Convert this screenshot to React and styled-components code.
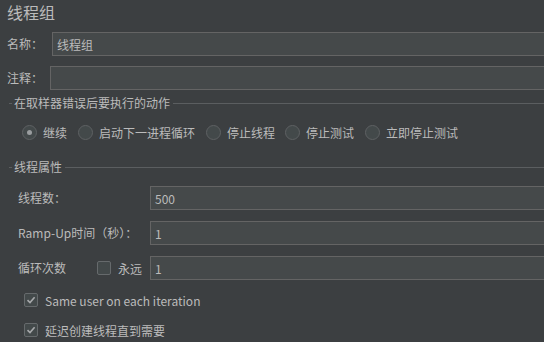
import React from "react";
import styled, { createGlobalStyle } from "styled-components";

const Global = createGlobalStyle`
  html, body { margin: 0; padding: 0; background: #3c3f41; overflow: hidden; }
  body { font-family: "Noto Sans CJK SC", "Liberation Sans", sans-serif; }
`;

const Panel = styled.div`
  width: 600px;
  height: 342px;
  background: #3c3f41;
  color: #bbbbbb;
  font-size: 12px;
  display: flex;
  flex-direction: column;
`;

const Title = styled.div`
  font-size: 16px;
  line-height: 24px;
  height: 24px;
  padding-left: 7px;
  color: #bbbbbb;
`;

const FieldRow = styled.div`
  display: flex;
  align-items: center;
  padding-left: ${(p) => p.$indent || 7}px;
  margin-top: ${(p) => p.$top || 0}px;
  height: 24px;
  flex: none;
`;

const Label = styled.span`
  width: ${(p) => p.$w}px;
  flex: none;
  white-space: nowrap;
  line-height: 16px;
`;

const TextInput = styled.div`
  flex: 1;
  height: 24px;
  box-sizing: border-box;
  background: #45494a;
  border: 1px solid #646464;
  padding-left: 4px;
  display: flex;
  align-items: center;
  color: #bbbbbb;
  font-size: 12px;
`;

const Legend = styled.div`
  display: flex;
  align-items: center;
  margin-top: ${(p) => p.$top}px;
  height: 14px;
  padding-left: 9px;
  flex: none;
`;

const Dash = styled.div`
  width: 3px;
  height: 1px;
  background: #5b5e60;
  margin-right: 2px;
`;

const LegendText = styled.span`
  line-height: 14px;
  white-space: nowrap;
`;

const LegendLine = styled.div`
  flex: 1;
  height: 1px;
  background: #5b5e60;
  margin-left: 3px;
`;

const RadioRow = styled.div`
  display: flex;
  align-items: center;
  margin-top: 14px;
  padding-left: 22px;
  height: 16px;
  flex: none;
`;

const RadioItem = styled.label`
  display: flex;
  align-items: center;
  margin-right: ${(p) => p.$gap}px;
  white-space: nowrap;
`;

const Circle = styled.span`
  width: 15px;
  height: 15px;
  box-sizing: border-box;
  border-radius: 50%;
  border: 1px solid #5e6163;
  background: #43494a;
  margin-right: 6px;
  display: flex;
  align-items: center;
  justify-content: center;
  &::after {
    content: "";
    width: 5px;
    height: 5px;
    border-radius: 50%;
    background: ${(p) => (p.$on ? "#9a9d9f" : "transparent")};
  }
`;

const Box = styled.span`
  width: 14px;
  height: 14px;
  box-sizing: border-box;
  border-radius: 2px;
  border: 1px solid #666a6c;
  background: #43494a;
  margin-right: 7px;
  display: flex;
  align-items: center;
  justify-content: center;
  flex: none;
`;

const CheckRow = styled.div`
  display: flex;
  align-items: center;
  padding-left: 24px;
  margin-top: ${(p) => p.$top}px;
  height: 16px;
  white-space: nowrap;
  flex: none;
`;

const InlineCheck = styled.span`
  display: flex;
  align-items: center;
  width: 53px;
  flex: none;
`;

const Check = () => (
  <svg width="10" height="10" viewBox="0 0 10 10">
    <path d="M1.5 5.2 L4 7.6 L8.6 2.2" fill="none" stroke="#a7a9ab" strokeWidth="1.6" />
  </svg>
);

const Radio = ({ on, label, gap }) => (
  <RadioItem $gap={gap}>
    <Circle $on={on} />
    {label}
  </RadioItem>
);

export default function App() {
  return (
    <>
      <Global />
      <Panel>
        <Title>线程组</Title>
        <FieldRow $top={8}>
          <Label $w={45}>名称：</Label>
          <TextInput>线程组</TextInput>
        </FieldRow>
        <FieldRow $top={10}>
          <Label $w={43}>注释：</Label>
          <TextInput />
        </FieldRow>
        <Legend $top={6}>
          <Dash />
          <LegendText>在取样器错误后要执行的动作</LegendText>
          <LegendLine />
        </Legend>
        <RadioRow>
          <Radio on label="继续" gap={11} />
          <Radio label="启动下一进程循环" gap={11} />
          <Radio label="停止线程" gap={10} />
          <Radio label="停止测试" gap={11} />
          <Radio label="立即停止测试" gap={0} />
        </RadioRow>
        <Legend $top={20}>
          <Dash />
          <LegendText>线程属性</LegendText>
          <LegendLine />
        </Legend>
        <FieldRow $indent={18} $top={12}>
          <Label $w={132}>线程数：</Label>
          <TextInput>500</TextInput>
        </FieldRow>
        <FieldRow $indent={18} $top={11}>
          <Label $w={132}>Ramp-Up时间（秒）：</Label>
          <TextInput>1</TextInput>
        </FieldRow>
        <FieldRow $indent={18} $top={11}>
          <Label $w={79}>循环次数</Label>
          <InlineCheck>
            <Box />
            永远
          </InlineCheck>
          <TextInput>1</TextInput>
        </FieldRow>
        <CheckRow $top={12}>
          <Box>
            <Check />
          </Box>
          Same user on each iteration
        </CheckRow>
        <CheckRow $top={14}>
          <Box>
            <Check />
          </Box>
          延迟创建线程直到需要
        </CheckRow>
      </Panel>
    </>
  );
}
